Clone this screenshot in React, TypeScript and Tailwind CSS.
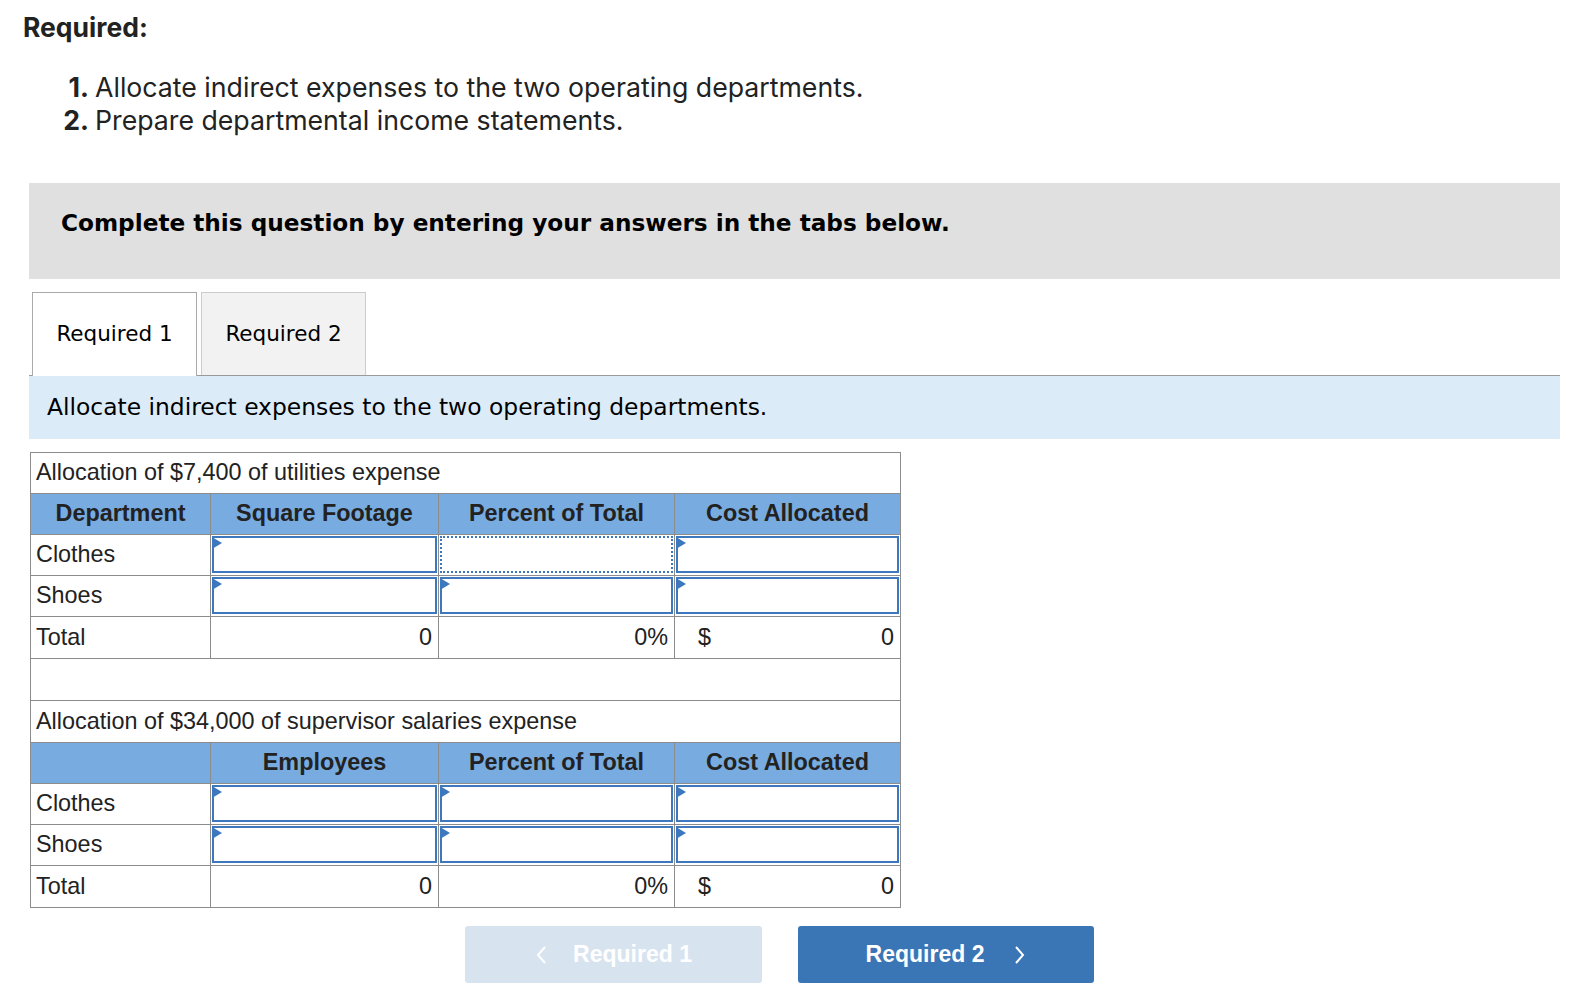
import React from "react";

function Flag() {
  return (
    <span className="absolute -left-[2px] -top-[1px] w-0 h-0 border-l-[10px] border-l-[#3d78be] border-t-[6px] border-t-transparent border-b-[6px] border-b-transparent" />
  );
}

function InputCell({ flag = true, dotted = false }: { flag?: boolean; dotted?: boolean }) {
  return (
    <td className="p-[1px] border border-[#8c8c8c] align-top">
      <div
        className={
          "relative h-[37px] border-2 border-[#3d78be] bg-white " + (dotted ? "border-dotted" : "border-solid")
        }
      >
        {flag && <Flag />}
      </div>
    </td>
  );
}

function Section({
  title,
  col2,
  firstHeader,
  dottedFirstPercent,
  lastTall,
}: {
  title: string;
  col2: string;
  firstHeader: string;
  dottedFirstPercent?: boolean;
  lastTall?: boolean;
}) {
  const cell = "border border-[#8c8c8c] px-[5px]";
  const head = "border border-[#8c8c8c] bg-[#78abe0] font-bold text-center text-[#222]";
  return (
    <>
      <tr className={lastTall ? "h-[42px]" : "h-[41px]"}>
        <td colSpan={4} className={cell}>
          {title}
        </td>
      </tr>
      <tr className="h-[41px]">
        <td className={head}>{firstHeader}</td>
        <td className={head}>{col2}</td>
        <td className={head}>Percent of Total</td>
        <td className={head}>Cost Allocated</td>
      </tr>
      <tr className="h-[41px]">
        <td className={cell}>Clothes</td>
        <InputCell />
        <InputCell flag={!dottedFirstPercent} dotted={dottedFirstPercent} />
        <InputCell />
      </tr>
      <tr className="h-[41px]">
        <td className={cell}>Shoes</td>
        <InputCell />
        <InputCell />
        <InputCell />
      </tr>
      <tr className="h-[42px]">
        <td className={cell}>Total</td>
        <td className={cell + " text-right pr-[6px]"}>0</td>
        <td className={cell + " text-right pr-[6px]"}>0%</td>
        <td className={cell + " pl-[23px] pr-[6px]"}>
          <div className="flex justify-between">
            <span>$</span>
            <span>0</span>
          </div>
        </td>
      </tr>
    </>
  );
}

export default function App() {
  return (
    <div className="w-[1574px] min-h-[995px] bg-white pl-[22px] pt-[12px] text-[#222]">
      <h1 className="font-['Inter',sans-serif] font-bold text-[26.5px] leading-[30px] ml-[1px]">Required:</h1>

      <div className="mt-[29px] font-['Inter',sans-serif] text-[26.7px] leading-[33px]">
        <div className="flex">
          <span className="w-[67px] text-right font-bold">1.</span>
          <span className="ml-[6px]">Allocate indirect expenses to the two operating departments.</span>
        </div>
        <div className="flex">
          <span className="w-[67px] text-right font-bold">2.</span>
          <span className="ml-[6px]">Prepare departmental income statements.</span>
        </div>
      </div>

      <div className="ml-[7px] w-[1531px]">
        <div className="mt-[46px] h-[96px] bg-[#e0e0e0] pt-[26px] pl-[32px] font-['DejaVu_Sans',Verdana,sans-serif] font-bold text-[23.2px] leading-[28px] text-black">
          Complete this question by entering your answers in the tabs below.
        </div>

        <div className="mt-[13px] flex items-end gap-[4px] pl-[3px] border-b border-[#9a9a9a] font-['DejaVu_Sans',Verdana,sans-serif] text-[21.5px] text-black">
          <div className="w-[165px] h-[84px] -mb-px bg-white border border-b-0 border-[#aaaaaa] flex items-center justify-center">
            Required 1
          </div>
          <div className="w-[165px] h-[83px] bg-[#f2f2f2] border border-b-0 border-[#cccccc] flex items-center justify-center">
            Required 2
          </div>
        </div>

        <div className="h-[63px] bg-[#dcebf8] pl-[18px] flex items-center font-['DejaVu_Sans',Verdana,sans-serif] text-[23.4px] text-black">
          Allocate indirect expenses to the two operating departments.
        </div>

        <table className="mt-[13px] ml-[1px] border-collapse font-['Liberation_Sans',Arial,sans-serif] text-[23.4px] text-[#222] table-fixed w-[870px]">
          <colgroup>
            <col className="w-[180px]" />
            <col className="w-[228px]" />
            <col className="w-[236px]" />
            <col className="w-[226px]" />
          </colgroup>
          <tbody>
            <Section
              title="Allocation of $7,400 of utilities expense"
              col2="Square Footage"
              firstHeader="Department"
              dottedFirstPercent
            />
            <tr className="h-[42px]">
              <td colSpan={4} className="border border-[#8c8c8c]"></td>
            </tr>
            <Section
              title="Allocation of $34,000 of supervisor salaries expense"
              col2="Employees"
              firstHeader=""
              lastTall
            />
          </tbody>
        </table>

        <div className="mt-[18px] ml-[436px] flex gap-[36px] font-['Liberation_Sans',Arial,sans-serif] font-bold text-[23px] text-white">
          <div className="w-[297px] h-[57px] rounded-[3px] bg-[#d8e3f0] flex items-center justify-center gap-[26px]">
            <svg width="12" height="20" viewBox="0 0 12 20" fill="none" stroke="white" strokeWidth="2">
              <path d="M10 2 L3 10 L10 18" />
            </svg>
            <span>Required 1</span>
          </div>
          <div className="w-[296px] h-[57px] rounded-[3px] bg-[#3a75b6] flex items-center justify-center gap-[30px]">
            <span>Required 2</span>
            <svg width="12" height="20" viewBox="0 0 12 20" fill="none" stroke="white" strokeWidth="2">
              <path d="M2 2 L9 10 L2 18" />
            </svg>
          </div>
        </div>
      </div>
    </div>
  );
}
